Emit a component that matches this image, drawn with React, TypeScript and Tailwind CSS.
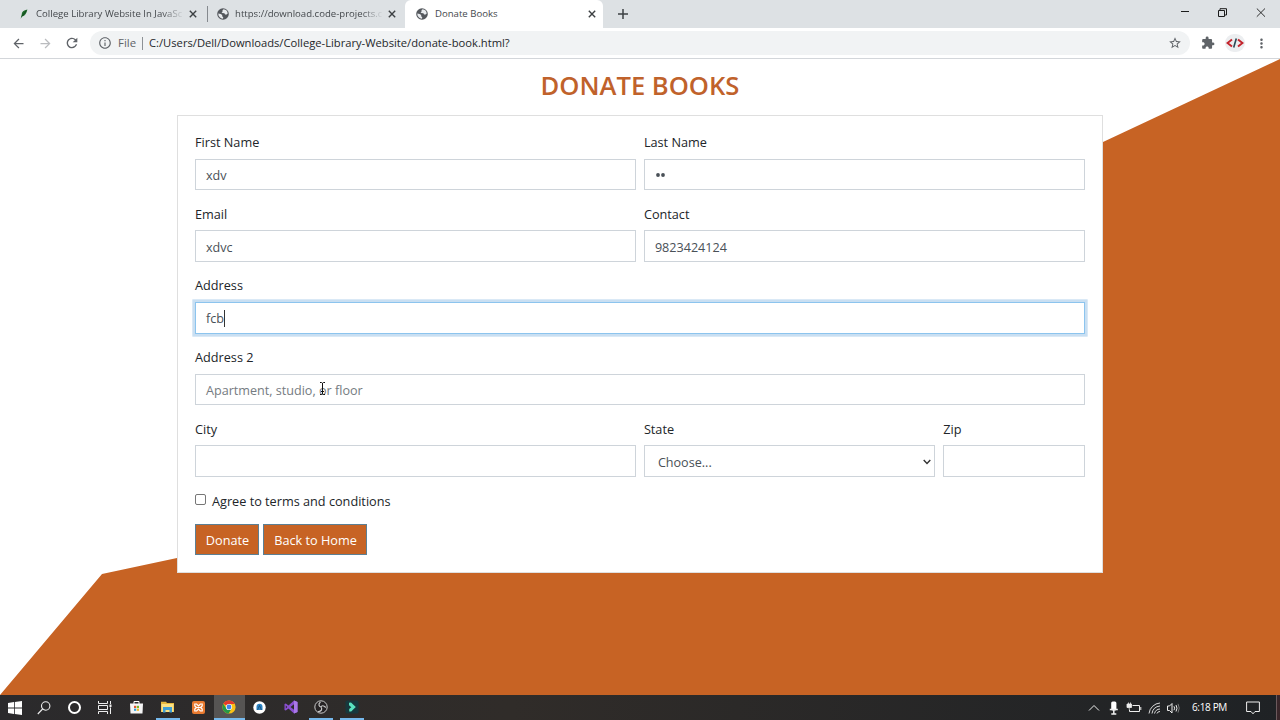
import type { ReactNode } from 'react';
import { MdArrowBack, MdArrowForward, MdExtension, MdInfoOutline, MdMoreVert, MdRefresh, MdStarBorder } from 'react-icons/md';

interface FieldProps {
  label: string;
  className?: string;
  children?: ReactNode;
}

function Field({ label, className = '', children }: FieldProps) {
  return (
    <div className={`flex flex-col ${className}`}>
      <label className="mb-[6.67px] block h-5 text-[12.7px] leading-[21px] text-[#212529]">{label}</label>
      {children}
    </div>
  );
}

const inputClass = 'flex h-[31.67px] items-center border border-[#ced4da] bg-white px-2.5 pt-1 text-[12.6px] text-[#495057]';

function GlobeIcon() {
  return (
    <svg viewBox="0 0 12 12" className="h-3 w-3 shrink-0">
      <circle cx="6" cy="6" r="5.8" fill="#54585d" />
      <path
        d="M6.6 1.3 5.4 2.2 5.8 3.2 4.6 4.2 5.4 5.1 7.4 5.3 8.1 6.4 9.6 6.6 10.7 5.6A4.8 4.8 0 0 0 6.6 1.3ZM1.3 5.5 3.6 5.9 5.3 7 5 8.2 6.2 9 6 10.7A4.8 4.8 0 0 1 1.3 5.5Z"
        fill="#e8ebee"
      />
    </svg>
  );
}

function LeafIcon() {
  return (
    <svg viewBox="0 0 12 12" className="h-3 w-3 shrink-0">
      <path d="M10.4 1.4C6.6 2.2 4.6 3.8 4.7 6.6L3.6 10.8 5.2 8.5C8 8 9.4 5.3 10.4 1.4Z" fill="#1d6b2b" />
      <path d="M9.2 2.8 4.8 8.4" stroke="#123d18" strokeWidth="0.8" />
    </svg>
  );
}

function CrossIcon() {
  return (
    <svg viewBox="0 0 8 8" className="h-2 w-2 shrink-0" stroke="#3c4043" strokeWidth="1.4">
      <path d="M.8.8 7.2 7.2M7.2.8.8 7.2" />
    </svg>
  );
}

function TabStrip() {
  return (
    <div className="flex h-7 bg-[#dde1e4] text-[9.6px] text-[#45494d]">
      <div className="flex w-[207px] items-center pl-[17px] pr-[9px]">
        <LeafIcon />
        <span className="ml-[7px] w-[148px] overflow-hidden whitespace-nowrap mask-r-from-85%">
          College Library Website In JavaSc
        </span>
        <span className="ml-[5px] flex"><CrossIcon /></span>
      </div>
      <div className="mt-1.5 h-4 w-px bg-[#85898e]" />
      <div className="flex w-[197px] items-center pl-[9px]">
        <GlobeIcon />
        <span className="ml-1.5 w-[148px] overflow-hidden whitespace-nowrap mask-r-from-85%">
          https://download.code-projects.c
        </span>
        <span className="ml-[5px] flex"><CrossIcon /></span>
      </div>
      <div className="flex w-[198px] items-center rounded-t-md bg-white pl-[11px] pr-[7px]">
        <GlobeIcon />
        <span className="ml-[7px] flex-1">Donate Books</span>
        <CrossIcon />
      </div>
      <svg viewBox="0 0 10 10" className="ml-[15px] mt-[9px] h-2.5 w-2.5" stroke="#3c4043" strokeWidth="1.5">
        <path d="M5 0V10M0 5H10" />
      </svg>
      <svg viewBox="0 0 90 10" className="ml-auto mr-3.5 mt-2 h-2.5 w-[90px]" fill="none" stroke="#1c1c1c">
        <path d="M5 3.5H13" />
        <path d="M42.5 2.5H48.5V8.5H42.5ZM44 2.5V.7H50.5V7H48.5" />
        <path d="M80.8.5 89 8.7M89 .5 80.8 8.7" strokeWidth="0.9" />
      </svg>
    </div>
  );
}

function Toolbar() {
  return (
    <div className="flex h-[31px] items-center border-b border-[#d3d6da] bg-white text-[#5f6368]">
      <MdArrowBack className="ml-[11px] size-[15px]" />
      <MdArrowForward className="ml-3 size-[15px] text-[#babcbf]" />
      <MdRefresh className="ml-[11px] size-4" />
      <div className="ml-2.5 flex h-6 w-[1100px] items-center rounded-full bg-[#f1f3f4] pl-2 pr-2">
        <MdInfoOutline className="size-[14px]" />
        <span className="ml-1.5 text-[11.4px]">File</span>
        <span className="mx-1.5 h-[13px] w-px bg-[#8d9195]" />
        <span className="text-[11.2px] text-[#24272a]">
          C:/Users/Dell/Downloads/College-Library-Website/donate-book.html?
        </span>
        <MdStarBorder className="ml-auto size-[14px]" />
      </div>
      <MdExtension className="ml-[11px] size-[14px]" />
      <span className="ml-[10px] flex h-[18px] w-[20px] items-center justify-center rounded-full bg-[#eceef0]">
        <svg viewBox="0 0 18 10" className="h-2.5 w-[18px]" fill="none" strokeWidth="2">
          <path d="M6 1.5 1.5 5 6 8.5M12 1.5 16.5 5 12 8.5" stroke="#c3242c" />
          <path d="M10.3.5 7.7 9.5" stroke="#2a4a55" strokeWidth="1.6" />
        </svg>
      </span>
      <MdMoreVert className="ml-[9px] size-[15px]" />
    </div>
  );
}

function DonateForm() {
  return (
    <form className="mx-auto w-[926px] border border-[#dfdfdf] bg-white px-[17px] pt-4 pb-[17px]">
      <div className="grid grid-cols-[441px_291.5px_142px] gap-x-[7.9px] gap-y-[13.33px]">
        <Field label="First Name">
          <div className={inputClass}>xdv</div>
        </Field>
        <Field label="Last Name" className="col-span-2">
          <div className={inputClass}>
            <svg viewBox="0 0 12 6" className="mb-0.5 h-1.5 w-3" fill="#495057">
              <circle cx="3" cy="3" r="1.9" />
              <circle cx="8" cy="3" r="1.9" />
            </svg>
          </div>
        </Field>
        <Field label="Email">
          <div className={inputClass}>xdvc</div>
        </Field>
        <Field label="Contact" className="col-span-2">
          <div className={inputClass}>9823424124</div>
        </Field>
        <Field label="Address" className="col-span-3">
          <div className="flex h-[31.67px] items-center border border-[#8cc4ee] bg-white px-2.5 pt-[3px] text-[12.6px] text-[#495057] ring-[2.67px] ring-[#c9dff2]">
            fcb
            <span className="mb-0.5 h-[17px] w-px bg-[#333]" />
          </div>
        </Field>
        <Field label="Address 2" className="col-span-3">
          <div className={inputClass}>
            <span className="relative text-[#757b81]">
              Apartment, studio, or floor
              <svg viewBox="0 0 7 13" className="absolute left-[113px] top-0 h-[13px] w-[7px]" fill="none" stroke="#111">
                <path d="M1 .5H2.5L3.5 1.3 4.5 .5H6M3.5 1V12M1 12.5H2.5L3.5 11.7 4.5 12.5H6M2 9.5H5" />
              </svg>
            </span>
          </div>
        </Field>
        <Field label="City">
          <div className={inputClass} />
        </Field>
        <Field label="State">
          <div className="flex h-[31.67px] items-center justify-between border border-[#ced4da] bg-white pl-[13px] pr-[3px] pt-1 text-[12.6px] text-[#495057]">
            Choose...
            <svg viewBox="0 0 8 6" className="mb-[3px] h-1.5 w-2" fill="none" stroke="#333" strokeWidth="1.4">
              <path d="M.7 1 4 4.5 7.3 1" />
            </svg>
          </div>
        </Field>
        <Field label="Zip">
          <div className={inputClass} />
        </Field>
      </div>
      <div className="mt-[13.33px] flex h-5 items-center text-[12.7px] text-[#212529]">
        <span className="mb-px h-[11px] w-[11px] rounded-[2px] border border-[#767676]" />
        <span className="ml-1.5 mt-[3px] leading-[21px]">Agree to terms and conditions</span>
      </div>
      <div className="mt-[13.33px] flex gap-1 text-[12.7px] text-white">
        <button type="button" className="h-[31.67px] w-16 border border-[#5b7f94] bg-[#c76324] pl-px pt-0.5">Donate</button>
        <button type="button" className="h-[31.67px] w-[104px] border border-[#5b7f94] bg-[#c76324] pl-px pt-0.5">Back to Home</button>
      </div>
    </form>
  );
}

interface TaskProps {
  active?: boolean;
  running?: boolean;
  children: ReactNode;
}

function Task({ active, running, children }: TaskProps) {
  return (
    <div className={`flex w-[30.75px] flex-col items-center ${active ? 'bg-[#565453]' : ''}`}>
      <div className="flex h-[23px] items-center pt-px">{children}</div>
      {(active || running) && <div className={`h-0.5 bg-[#76b9ed] ${active ? 'w-full' : 'w-6'}`} />}
    </div>
  );
}

function Taskbar() {
  return (
    <div className="flex h-[25px] bg-linear-to-r from-[#2b2a2c] via-[#302c29] via-40% to-[#1f2225] text-white">
      <div className="flex w-[29px] items-center justify-center">
        <svg viewBox="0 0 14 14" className="size-[14px]" fill="#fff">
          <path d="M0 2 6 1.1V6.6H0ZM6.8 1 14 0V6.6H6.8ZM0 7.4H6V12.9L0 12ZM6.8 7.4H14V14L6.8 13Z" />
        </svg>
      </div>
      <div className="flex w-[30px] items-center justify-center">
        <svg viewBox="0 0 14 14" className="size-[14px]" fill="none" stroke="#eee" strokeWidth="1.1">
          <circle cx="8.7" cy="5" r="4.2" />
          <path d="M5.6 8 .8 13" />
        </svg>
      </div>
      <div className="flex w-[30px] items-center justify-center">
        <span className="size-[13px] rounded-full border-2 border-white" />
      </div>
      <div className="flex w-[31px] items-center justify-center">
        <svg viewBox="0 0 14 13" className="h-[13px] w-[14px]" fill="none" stroke="#eee">
          <path d="M.5 0V2.5H9.5V0M.5 13V10.5H9.5V13M.5 4.5H9.5V8.5H.5ZM12.5 0V3M12.5 6.5V13" />
          <path d="M11.5 3.5H13.5V6H11.5Z" fill="#eee" stroke="none" />
        </svg>
      </div>
      <div className="ml-[1.5px] flex">
        <Task>
          <svg viewBox="0 0 13 14" className="h-[14px] w-[13px]">
            <path d="M4 4V1.5H9V4" fill="none" stroke="#fff" />
            <path d="M0 3.5H13L12.5 13.5H.5Z" fill="#f5f5f5" />
            <path d="M4 5.8H6.2V8H4Z" fill="#e5532d" />
            <path d="M6.8 5.8H9V8H6.8Z" fill="#76b82a" />
            <path d="M4 8.6H6.2V10.8H4Z" fill="#2aa0da" />
            <path d="M6.8 8.6H9V10.8H6.8Z" fill="#f5b921" />
          </svg>
        </Task>
        <Task running>
          <svg viewBox="0 0 13 12" className="h-3 w-[13px]">
            <path d="M0 .8H5L6 2H13V11H0Z" fill="#e6b93f" />
            <path d="M.5 3H12.5V11H.5Z" fill="#fbe184" />
            <path d="M2 6H11V11.5H8.5V9H4.5V11.5H2Z" fill="#3f9fd5" />
          </svg>
        </Task>
        <Task>
          <svg viewBox="0 0 13 13" className="size-[13px]">
            <rect width="13" height="13" rx="2" fill="#e87a30" />
            <path d="M2.8 3H4.6L6.5 5 8.4 3H10.2V5L8.6 6.5 10.2 8V10H8.4L6.5 8 4.6 10H2.8V8L4.4 6.5 2.8 5ZM4.8 6.5H8.2" fill="none" stroke="#fff" strokeWidth="1.2" />
          </svg>
        </Task>
        <Task active>
          <svg viewBox="0 0 14 14" className="size-[14px]">
            <circle cx="7" cy="7" r="6.6" fill="#fbc116" />
            <path d="M7 7 1.3 3.7A6.6 6.6 0 0 1 12.9 4H7Z" fill="#e33b2e" />
            <path d="M1.3 3.7A6.6 6.6 0 0 0 6.6 13.6L9.7 8.6 7 7 4.4 8.5Z" fill="#279847" />
            <circle cx="7" cy="7" r="3.1" fill="#fff" />
            <circle cx="7" cy="7" r="2.4" fill="#4285e8" />
          </svg>
        </Task>
        <Task>
          <svg viewBox="0 0 13 13" className="size-[13px]">
            <circle cx="6.5" cy="6.5" r="6.2" fill="#fff" />
            <path d="M3.5 9V5.8A3 3 0 0 1 9.5 5.8V9Z" fill="#2b83c4" />
            <path d="M6.5 4.5 8.5 9M6.5 4.5 4.5 9" stroke="#1a4566" strokeWidth=".7" />
          </svg>
        </Task>
        <Task>
          <svg viewBox="0 0 14 14" className="size-[14px]">
            <path d="M10 .5 13.5 2V12L10 13.5 4.5 8.5 1.8 10.6.5 10V4L1.8 3.4 4.5 5.5ZM10 4.2 6.5 7 10 9.8ZM1.8 5.5V8.5L3.3 7Z" fill="#8a4fd0" fillRule="evenodd" />
            <path d="M10 .5 13.5 2V12L10 13.5Z" fill="#a978e8" />
          </svg>
        </Task>
        <Task running>
          <svg viewBox="0 0 14 14" className="size-[14px]" fill="none" stroke="#c9c9c9">
            <circle cx="7" cy="7" r="6.2" fill="#262324" />
            <path d="M6.5 2C3.8 4 5 6.8 7 7M11.8 7.5C9.5 5 7.5 5.5 7 7M4 11.5C7.5 11.8 8.5 9 7 7" strokeWidth="1.2" />
          </svg>
        </Task>
        <Task running>
          <svg viewBox="0 0 14 14" className="size-[14px]">
            <rect x=".5" y=".5" width="13" height="13" rx="1.5" fill="#17383d" />
            <path d="M4 2.8 6 2.6 10.8 7 6.2 11.5H4.2L4.2 9 6.3 7.2 4 5.3Z" fill="#59e3c0" />
          </svg>
        </Task>
      </div>
      <div className="ml-auto flex items-center">
        <svg viewBox="0 0 92 16" className="h-4 w-[92px]" fill="none" stroke="#eee">
          <path d="M1 10.5 6 5.5 11 10.5" />
          <rect x="23.2" y="1.5" width="5.2" height="9" rx="1.5" fill="#fff" stroke="none" />
          <path d="M21.8 9.5H29.8M25.8 10V14M23.3 14H28.3" strokeWidth="1.5" />
          <path d="M44.5 5.5H51.5V11.5H41.5V9.5M52.8 7V10" />
          <path d="M39 4H43.5V7.5H39ZM40.5 2.5V4M42.5 2.5V4M41.2 7.5V9.5" fill="#eee" strokeWidth=".8" />
          <path d="M61 13.5A12 12 0 0 1 72 3M64 13.5A9 9 0 0 1 72 6M66.5 13.5A6 6 0 0 1 72 9M69 13.5A3 3 0 0 1 72 11.5" strokeWidth=".9" />
          <path d="M79.5 6H81.5L84 3.5V13L81.5 10.5H79.5ZM86 6.3Q87.3 8.2 86 10.2M88 5Q90 8.2 88 11.5" />
          <path d="M90 3.8Q92.5 8.2 90 12.6" stroke="#777" />
        </svg>
        <span className="ml-3 w-[37px] whitespace-nowrap text-[10px] tracking-[-0.35px]">6:18 PM</span>
        <svg viewBox="0 0 14 14" className="ml-[17px] size-[14px]" fill="none" stroke="#eee">
          <path d="M.6 1H13.4V10.5H9L7 12.8 5 10.5H.6Z" />
        </svg>
        <span className="ml-4 h-[25px] w-[4px] border-l border-[#6b5a5d] bg-[#39262a]" />
      </div>
    </div>
  );
}

export default function App() {
  return (
    <div className="flex h-[720px] w-[1280px] flex-col overflow-hidden bg-white font-['Open_Sans','Noto_Sans',sans-serif]">
      <TabStrip />
      <Toolbar />
      <main className="relative flex-1">
        <div className="absolute inset-0 bg-[#c76324] [clip-path:polygon(0_636px,102px_515px,177px_499px,1103px_83px,100%_0,100%_100%)]" />
        <div className="relative">
          <h1 className="h-14 pt-[9px] text-center text-[25.6px] font-semibold leading-9 text-[#c0622b]">DONATE BOOKS</h1>
          <DonateForm />
        </div>
      </main>
      <Taskbar />
    </div>
  );
}
